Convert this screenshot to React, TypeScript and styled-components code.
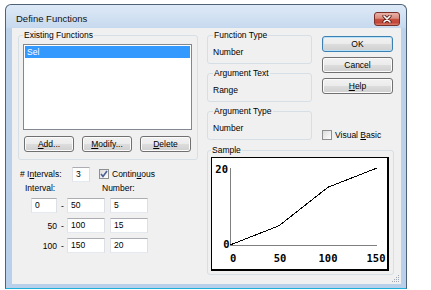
import React from "react";
import styled, { createGlobalStyle } from "styled-components";

const GlobalStyle = createGlobalStyle`
  html, body { margin: 0; padding: 0; background: #ffffff; }
  body {
    font-family: "Liberation Sans", Arial, sans-serif;
    font-size: 8.5px;
    color: #000;
  }
  * { box-sizing: border-box; }
`;

const Page = styled.div`
  padding: 4px 0 0 5px;
`;

const Window = styled.div`
  width: 402px;
  height: 285px;
  border: 1px solid #4f6278;
  border-bottom-color: #1fb0d8;
  border-radius: 6px 6px 0 0;
  background: linear-gradient(180deg, #dde9f6 0px, #c8daef 22px, #bcd2ea 24px, #b9d0ea 100%);
  padding: 0 5px 4px 6px;
  display: flex;
  flex-direction: column;
`;

const TitleBar = styled.div`
  height: 23px;
  flex: none;
  display: flex;
  align-items: flex-start;
  justify-content: space-between;
`;

const Title = styled.div`
  margin: 9px 0 0 4px;
  font-size: 9.5px;
  line-height: 10px;
  color: #111;
`;

const CloseButton = styled.div`
  margin: 7px 1px 0 0;
  width: 26px;
  height: 14px;
  border: 1px solid #7a3028;
  border-radius: 3px;
  background: linear-gradient(180deg, #eab2a8 0%, #d98a7c 45%, #c7503e 50%, #c4463a 80%, #d8806c 100%);
  display: flex;
  align-items: center;
  justify-content: center;
`;

const Client = styled.div`
  flex: 1;
  background: #f0f0f0;
  display: grid;
  grid-template-columns: 180px 187px;
  column-gap: 9px;
  align-items: start;
  padding: 2px 0 0 6px;
  position: relative;
`;

const Column = styled.div`
  display: flex;
  flex-direction: column;
`;

const Group = styled.fieldset<{ $pad: string }>`
  margin: 0;
  min-width: 0;
  border: 1px solid #d5dfe5;
  border-radius: 3px;
  padding: ${(p) => p.$pad};
`;

const Legend = styled.legend`
  padding: 0 1px;
  font-size: 8.5px;
  line-height: 10px;
`;

const ListBox = styled.div`
  margin-top: 4px;
  height: 86px;
  border: 1px solid #828790;
  background: #ffffff;
  padding: 1px;
`;

const ListItem = styled.div<{ $selected?: boolean }>`
  height: 12px;
  line-height: 12px;
  padding-left: 2px;
  background: ${(p) => (p.$selected ? "#3399ff" : "transparent")};
  color: ${(p) => (p.$selected ? "#ffffff" : "#000")};
`;

const ButtonRow = styled.div`
  margin-top: 6px;
  display: flex;
  justify-content: space-between;
  padding: 0 1px;
`;

const PushButton = styled.div<{ $w: number; $default?: boolean }>`
  width: ${(p) => p.$w}px;
  height: 16px;
  border: 1px solid ${(p) => (p.$default ? "#3c7fb1" : "#707070")};
  border-radius: 3px;
  background: linear-gradient(180deg, #f2f2f2 0%, #ebebeb 50%, #dddddd 50%, #cfcfcf 100%);
  box-shadow: inset 0 0 0 1px ${(p) => (p.$default ? "#b8e2fb" : "#fbfbfb")};
  display: flex;
  align-items: center;
  justify-content: center;
  line-height: 10px;
  color: #000;
`;

const Acc = styled.span`
  text-decoration: underline;
  text-underline-offset: 1px;
`;

const IntervalsRow = styled.div`
  margin-top: 6px;
  height: 16px;
  display: flex;
  align-items: center;
`;

const FieldLabel = styled.span<{ $w?: number }>`
  width: ${(p) => (p.$w ? `${p.$w}px` : "auto")};
  padding-left: 2px;
  line-height: 10px;
`;

const Edit = styled.div<{ $w: number }>`
  width: ${(p) => p.$w}px;
  height: 15px;
  border: 1px solid;
  border-color: #abadb3 #dbdfe6 #e3e9ef #e2e3ea;
  background: #ffffff;
  padding-left: 3px;
  line-height: 13px;
`;

const CheckBox = styled.div<{ $gap?: number }>`
  margin-left: ${(p) => p.$gap ?? 0}px;
  width: 10px;
  height: 10px;
  border: 1px solid #8e8f8f;
  background: linear-gradient(135deg, #dcdcdc 0%, #f4f4f4 70%, #ffffff 100%);
  display: flex;
  align-items: center;
  justify-content: center;
`;

const CheckText = styled.span`
  margin-left: 3px;
  line-height: 10px;
`;

const HeaderRow = styled.div`
  margin-top: 1px;
  display: grid;
  grid-template-columns: 84px auto;
  line-height: 10px;
`;

const HeaderCell = styled.span<{ $indent?: number }>`
  padding-left: ${(p) => p.$indent ?? 0}px;
`;

const Rows = styled.div`
  margin-top: 5px;
  display: flex;
  flex-direction: column;
  gap: 5px;
`;

const RangeRow = styled.div`
  display: flex;
  height: 15px;
  align-items: center;
`;

const LowCell = styled.div`
  width: 40px;
  display: flex;
  justify-content: flex-end;
  padding-right: 1px;
  line-height: 10px;
`;

const Dash = styled.div`
  width: 9px;
  text-align: center;
  line-height: 10px;
`;

const NumGap = styled.div`
  width: 5px;
`;

const TopArea = styled.div`
  display: grid;
  grid-template-columns: 105px 71px;
  column-gap: 10px;
`;

const GroupsStack = styled.div`
  display: flex;
  flex-direction: column;
  gap: 4px;
`;

const InfoText = styled.div`
  line-height: 10px;
`;

const ButtonsStack = styled.div`
  display: flex;
  flex-direction: column;
  gap: 5px;
  padding-top: 6px;
`;

const CheckRow = styled.div`
  margin-top: auto;
  display: flex;
  align-items: center;
  height: 10px;
`;

const SampleGroup = styled(Group)`
  margin-top: 5px;
`;

const ChartBox = styled.div`
  width: 178px;
  height: 114px;
  background: #ffffff;
  border: 1px solid #000;
  border-right-width: 2px;
  border-bottom-width: 2px;
`;

const Grip = styled.svg`
  position: absolute;
  right: 1px;
  bottom: 1px;
`;

const data: [number, number][] = [
  [0, 0],
  [50, 5],
  [100, 15],
  [150, 20],
];

const Chart: React.FC = () => {
  const x0 = 18;
  const y0 = 87;
  const sx = (v: number) => x0 + (v / 150) * 147;
  const sy = (n: number) => y0 - (n / 20) * 77;
  const pts = data.map(([a, b]) => `${sx(a)},${sy(b)}`).join(" ");
  const labelStyle: React.CSSProperties = {};
  return (
    <svg width="175" height="111" viewBox="0 0 175 111" style={{ display: "block" }}>
      <g fontFamily="'DejaVu Sans Mono', 'Liberation Mono', monospace" fontWeight="bold" fontSize="10.5" fill="#000" style={labelStyle}>
        <text x="16" y="15" textAnchor="end">20</text>
        <text x="17.5" y="90" textAnchor="end">0</text>
        <text x="18" y="104">0</text>
        <text x={sx(50) + 1} y="104" textAnchor="middle">50</text>
        <text x={sx(100)} y="104" textAnchor="middle">100</text>
        <text x={sx(150) - 1} y="104" textAnchor="middle">150</text>
      </g>
      <g stroke="#808080" strokeWidth="1" shapeRendering="crispEdges">
        <line x1={x0 + 0.5} y1="10" x2={x0 + 0.5} y2={y0 + 0.5} />
        <line x1={x0} y1={y0 + 0.5} x2={sx(150)} y2={y0 + 0.5} />
      </g>
      <polyline points={pts} fill="none" stroke="#000" strokeWidth="1" shapeRendering="crispEdges" />
    </svg>
  );
};

export default function App() {
  return (
    <>
      <GlobalStyle />
      <Page>
        <Window>
          <TitleBar>
            <Title>Define Functions</Title>
            <CloseButton>
              <svg width="10" height="8" viewBox="0 0 10 8">
                <path d="M2 1 L8 7 M8 1 L2 7" stroke="#5a1e18" strokeWidth="3.2" strokeLinecap="round" />
                <path d="M2 1 L8 7 M8 1 L2 7" stroke="#ffffff" strokeWidth="1.6" strokeLinecap="round" />
              </svg>
            </CloseButton>
          </TitleBar>
          <Client>
            <Column>
              <Group $pad="0 5px 7px 4px">
                <Legend>Existing Functions</Legend>
                <ListBox>
                  <ListItem $selected>Sel</ListItem>
                </ListBox>
                <ButtonRow>
                  <PushButton $w={50}><span><Acc>A</Acc>dd...</span></PushButton>
                  <PushButton $w={50}><span><Acc>M</Acc>odify...</span></PushButton>
                  <PushButton $w={51}><span><Acc>D</Acc>elete</span></PushButton>
                </ButtonRow>
              </Group>
              <IntervalsRow>
                <FieldLabel $w={54}># I<Acc>n</Acc>tervals:</FieldLabel>
                <Edit $w={18}>3</Edit>
                <CheckBox $gap={9}>
                  <svg width="8" height="8" viewBox="0 0 8 8">
                    <path d="M1 4 L3 6.5 L7 1" stroke="#4a5f97" strokeWidth="1.6" fill="none" />
                  </svg>
                </CheckBox>
                <CheckText>Contin<Acc>u</Acc>ous</CheckText>
              </IntervalsRow>
              <HeaderRow>
                <HeaderCell $indent={7}>Interval:</HeaderCell>
                <HeaderCell>Number:</HeaderCell>
              </HeaderRow>
              <Rows>
                <RangeRow>
                  <LowCell><Edit $w={26}>0</Edit></LowCell>
                  <Dash>-</Dash>
                  <Edit $w={38}>50</Edit>
                  <NumGap />
                  <Edit $w={38}>5</Edit>
                </RangeRow>
                <RangeRow>
                  <LowCell>50</LowCell>
                  <Dash>-</Dash>
                  <Edit $w={38}>100</Edit>
                  <NumGap />
                  <Edit $w={38}>15</Edit>
                </RangeRow>
                <RangeRow>
                  <LowCell>100</LowCell>
                  <Dash>-</Dash>
                  <Edit $w={38}>150</Edit>
                  <NumGap />
                  <Edit $w={38}>20</Edit>
                </RangeRow>
              </Rows>
            </Column>
            <Column>
              <TopArea>
                <GroupsStack>
                  <Group $pad="7px 4px 6px 5px">
                    <Legend>Function Type</Legend>
                    <InfoText>Number</InfoText>
                  </Group>
                  <Group $pad="7px 4px 6px 5px">
                    <Legend>Argument Text</Legend>
                    <InfoText>Range</InfoText>
                  </Group>
                  <Group $pad="7px 4px 6px 5px">
                    <Legend>Argument Type</Legend>
                    <InfoText>Number</InfoText>
                  </Group>
                </GroupsStack>
                <ButtonsStack>
                  <PushButton $w={71} $default>OK</PushButton>
                  <PushButton $w={71}>Cancel</PushButton>
                  <PushButton $w={71}><span><Acc>H</Acc>elp</span></PushButton>
                  <CheckRow>
                    <CheckBox />
                    <CheckText>Visual <Acc>B</Acc>asic</CheckText>
                  </CheckRow>
                </ButtonsStack>
              </TopArea>
              <SampleGroup $pad="2px 4px 3px 3px">
                <Legend>Sample</Legend>
                <ChartBox>
                  <Chart />
                </ChartBox>
              </SampleGroup>
            </Column>
            <Grip width="11" height="11" viewBox="0 0 11 11">
              <g fill="#a0a8b4">
                <rect x="9" y="3" width="1" height="1" />
                <rect x="7" y="5" width="1" height="1" />
                <rect x="9" y="5" width="1" height="1" />
                <rect x="5" y="7" width="1" height="1" />
                <rect x="7" y="7" width="1" height="1" />
                <rect x="9" y="7" width="1" height="1" />
                <rect x="3" y="9" width="1" height="1" />
                <rect x="5" y="9" width="1" height="1" />
                <rect x="7" y="9" width="1" height="1" />
                <rect x="9" y="9" width="1" height="1" />
              </g>
            </Grip>
          </Client>
        </Window>
      </Page>
    </>
  );
}
